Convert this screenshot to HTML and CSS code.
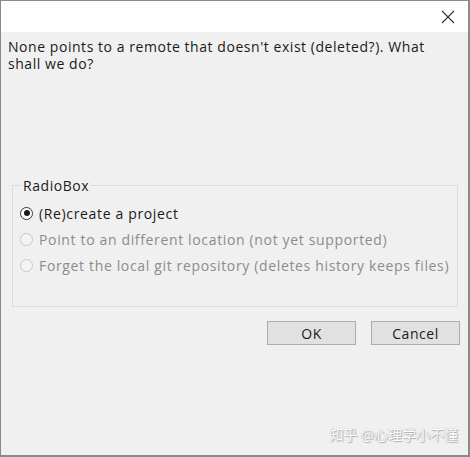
FILE: index.html
```html
<!DOCTYPE html>
<html>
<head>
<meta charset="utf-8">
<link rel="stylesheet" href="styles.css">
</head>
<body>
<div class="window">
  <div class="titlebar">
    <svg class="close" width="14" height="14" viewBox="0 0 14 14"><path d="M1 1 L13 13 M13 1 L1 13" stroke="#333" stroke-width="1.1" fill="none"/></svg>
  </div>
  <div class="body">
    <p class="message">None points to a remote that doesn't exist (deleted?). What shall we do?</p>
    <fieldset class="group">
      <legend class="legend">RadioBox</legend>
      <label class="option"><span class="radio checked"></span><span>(Re)create a project</span></label>
      <label class="option disabled"><span class="radio"></span><span>Point to an different location (not yet supported)</span></label>
      <label class="option disabled"><span class="radio"></span><span>Forget the local git repository (deletes history keeps files)</span></label>
    </fieldset>
    <div class="buttons">
      <button class="btn">OK</button>
      <button class="btn">Cancel</button>
    </div>
    <div class="watermark">知乎 @心理学小不懂</div>
  </div>
</div>
</body>
</html>
```
FILE: styles.css
```css
html, body {
  margin: 0;
  padding: 0;
  background: #f0f0f0;
}
.window {
  width: 470px;
  height: 457px;
  box-sizing: border-box;
  border: 1px solid #8a8a8a;
  border-right-width: 2px;
  border-bottom-width: 2px;
  display: flex;
  flex-direction: column;
  font-family: "Open Sans", "Noto Sans", "Noto Sans CJK SC", sans-serif;
  color: #1a1a1a;
}
.titlebar {
  height: 31px;
  background: #ffffff;
  display: flex;
  justify-content: flex-end;
  align-items: center;
  padding-right: 13px;
}
.close {
  display: block;
  margin-top: 1px;
}
.body {
  flex: 1;
  background: #f0f0f0;
  position: relative;
  padding: 6px 0 0 7px;
}
.message {
  margin: 0;
  font-size: 14px;
  letter-spacing: 0.55px;
  line-height: 17px;
  width: 440px;
}
.group {
  margin: 104px 0 0 4px;
  width: 446px;
  height: 131px;
  box-sizing: border-box;
  border: 1px solid #dcdcdc;
  padding: 5px 0 0 7px;
}
.legend {
  font-size: 14px;
  letter-spacing: 0.55px;
  padding: 0 2px;
  margin-left: 1px;
  color: #1a1a1a;
}
.option {
  display: flex;
  align-items: center;
  gap: 6px;
  height: 26px;
  font-size: 14px;
  letter-spacing: 0.65px;
  white-space: nowrap;
  color: #1a1a1a;
}
.option.disabled {
  color: #8c8c8c;
}
.radio {
  width: 13px;
  height: 13px;
  border-radius: 50%;
  border: 1px solid #333;
  background: #fff;
  box-sizing: border-box;
  position: relative;
  flex: none;
}
.option.disabled .radio {
  border-color: #c8c8c8;
  background: #f4f4f4;
}
.radio.checked::after {
  content: "";
  position: absolute;
  left: 2.5px;
  top: 2.5px;
  width: 6px;
  height: 6px;
  border-radius: 50%;
  background: #1a1a1a;
}
.buttons {
  display: flex;
  justify-content: flex-end;
  gap: 15px;
  margin-top: 14px;
  padding-right: 8px;
}
.btn {
  width: 89px;
  height: 24px;
  border: 1px solid #adadad;
  background: #e1e1e1;
  font-family: inherit;
  font-size: 14px;
  letter-spacing: 0.55px;
  color: #1a1a1a;
  padding: 0;
}
.watermark {
  position: absolute;
  right: 10px;
  bottom: 11px;
  font-size: 14px;
  color: #ffffff;
  text-shadow: 0 0 1px #9a9a9a, 1px 1px 1px #b0b0b0;
  font-family: "Noto Sans CJK SC", sans-serif;
}
```
